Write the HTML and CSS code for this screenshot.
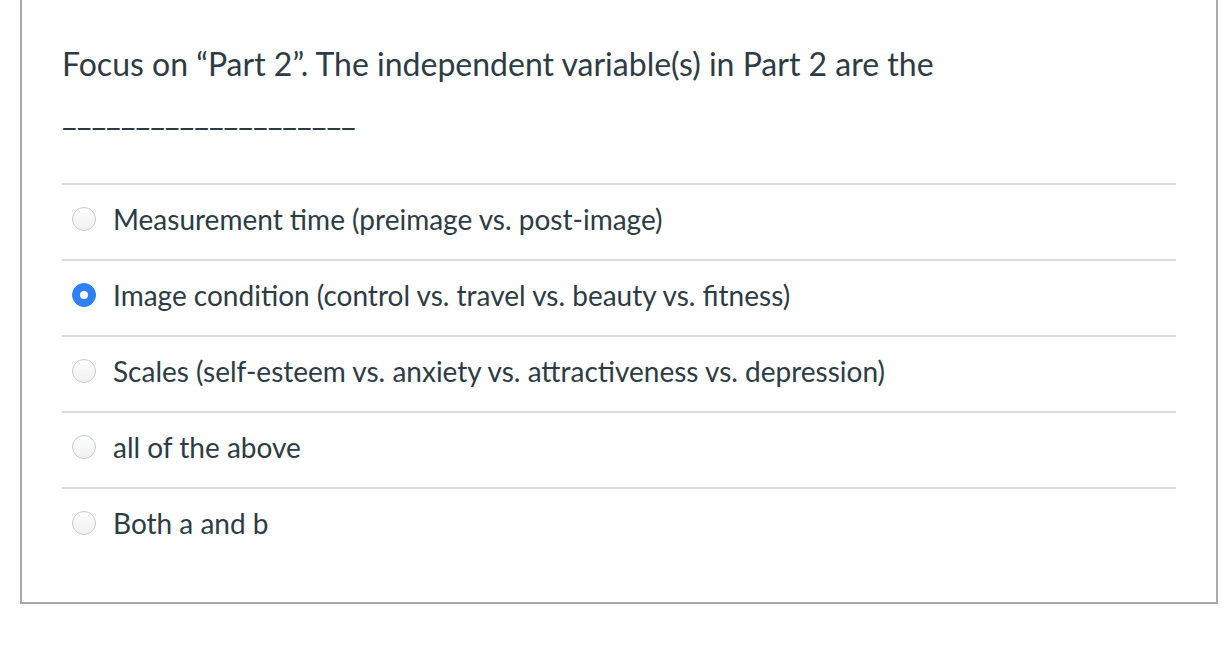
FILE: index.html
```html
<!DOCTYPE html>
<html>
<head>
<meta charset="utf-8">
<link rel="stylesheet" href="styles.css">
</head>
<body>
<div class="page">
  <div class="quiz-box">
    <div class="question">
      <p class="q-text">Focus on “Part 2”. The independent variable(s) in Part 2 are the</p>
      <p class="q-blank">____________________</p>
    </div>
    <ul class="answers">
      <li class="answer"><span class="radio"></span><span class="label">Measurement time (preimage vs. post-image)</span></li>
      <li class="answer"><span class="radio checked"></span><span class="label">Image condition (control vs. travel vs. beauty vs. fitness)</span></li>
      <li class="answer"><span class="radio"></span><span class="label">Scales (self-esteem vs. anxiety vs. attractiveness vs. depression)</span></li>
      <li class="answer"><span class="radio"></span><span class="label">all of the above</span></li>
      <li class="answer"><span class="radio"></span><span class="label">Both a and b</span></li>
    </ul>
  </div>
</div>
</body>
</html>
```

FILE: styles.css
```css
html, body {
  margin: 0;
  padding: 0;
  background: #ffffff;
}
.page {
  padding-left: 20px;
}
.quiz-box {
  border: 2px solid #aaaaaa;
  border-top: none;
  padding: 44px 40px 39px 40px;
  box-sizing: content-box;
  width: 1114px;
  font-family: Lato, "Open Sans", sans-serif;
  color: #2d3b45;
}
.question p {
  margin: 0;
  font-size: 32px;
  line-height: 40px;
}
.question .q-text {
  margin-bottom: 9px;
}
.answers {
  list-style: none;
  margin: 50px 0 0 0;
  padding: 0;
}
.answer {
  display: flex;
  align-items: center;
  border-top: 2px solid #dcdcdc;
  padding-bottom: 6px;
  box-sizing: content-box;
  height: 68px;
}
.radio {
  width: 22px;
  height: 22px;
  border-radius: 50%;
  border: 1px solid #c4c9cd;
  background: linear-gradient(#ffffff, #f0f0f0);
  margin-left: 10px;
  margin-right: 17px;
  flex: none;
  box-sizing: content-box;
  position: relative;
}
.radio.checked {
  border-color: #2f80f5;
  background: #2f80f5;
}
.radio.checked::after {
  content: "";
  position: absolute;
  left: 7px;
  top: 7px;
  width: 8px;
  height: 8px;
  border-radius: 50%;
  background: #ffffff;
}
.label {
  font-size: 28px;
  line-height: 32px;
}
```
